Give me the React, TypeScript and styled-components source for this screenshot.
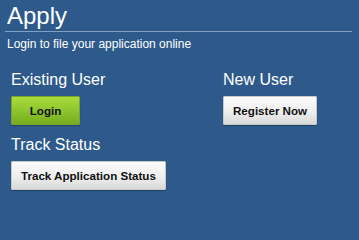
import React from 'react'
import styled, { createGlobalStyle } from 'styled-components'

const GlobalStyle = createGlobalStyle`
	html, body {
		margin: 0;
		padding: 0;
		background: #2d5a8b;
	}
	body {
		font-family: 'Liberation Sans', Arial, sans-serif;
		color: #ffffff;
	}
`

const StyledPanel = styled.div`
	width: 359px;
	height: 208px;
	box-sizing: border-box;
	padding: 2px 7px 0 5px;
	background: #2d5a8b;
	overflow: hidden;
`

const StyledTitle = styled.h1`
	margin: 0;
	padding: 0 0 1px 2px;
	font-size: 24px;
	font-weight: normal;
	line-height: 28px;
	border-bottom: 1px solid #7f9fc6;
`

const StyledIntro = styled.p`
	margin: 5px 0 0 2px;
	font-size: 12px;
	line-height: 14px;
`

const StyledGrid = styled.div`
	display: grid;
	grid-template-columns: 212px 1fr;
	row-gap: 11px;
	margin: 20px 0 0 6px;
`

const StyledSection = styled.div`
	display: flex;
	flex-direction: column;
	align-items: flex-start;
`

const StyledLabel = styled.div`
	font-size: 16px;
	line-height: 18px;
	margin-bottom: 7px;
`

const StyledButton = styled.button<{ $variant?: 'green' | 'grey' }>`
	height: 29px;
	box-sizing: border-box;
	padding: 0 9px;
	min-width: ${(p) => (p.$variant === 'green' ? '69px' : '0')};
	font-family: 'Liberation Sans', Arial, sans-serif;
	font-size: 11.6px;
	font-weight: bold;
	color: #111111;
	cursor: pointer;
	border: 1px solid
		${(p) => (p.$variant === 'green' ? '#7aa52a' : '#c8c8c8')};
	border-radius: 1px;
	background: ${(p) =>
		p.$variant === 'green'
			? 'linear-gradient(to bottom, #a9dc3c 0%, #8cc22c 55%, #76ad1e 100%)'
			: 'linear-gradient(to bottom, #fbfbfb 0%, #eeeeee 55%, #d9d9d9 100%)'};
	box-shadow: 0 1px 1px rgba(0, 0, 0, 0.25);
`

const App: React.FC = () => {
	return (
		<>
			<GlobalStyle />
			<StyledPanel>
				<StyledTitle>Apply</StyledTitle>
				<StyledIntro>Login to file your application online</StyledIntro>
				<StyledGrid>
					<StyledSection>
						<StyledLabel>Existing User</StyledLabel>
						<StyledButton $variant="green">Login</StyledButton>
					</StyledSection>
					<StyledSection>
						<StyledLabel>New User</StyledLabel>
						<StyledButton>Register Now</StyledButton>
					</StyledSection>
					<StyledSection>
						<StyledLabel>Track Status</StyledLabel>
						<StyledButton>Track Application Status</StyledButton>
					</StyledSection>
				</StyledGrid>
			</StyledPanel>
		</>
	)
}

export default App
